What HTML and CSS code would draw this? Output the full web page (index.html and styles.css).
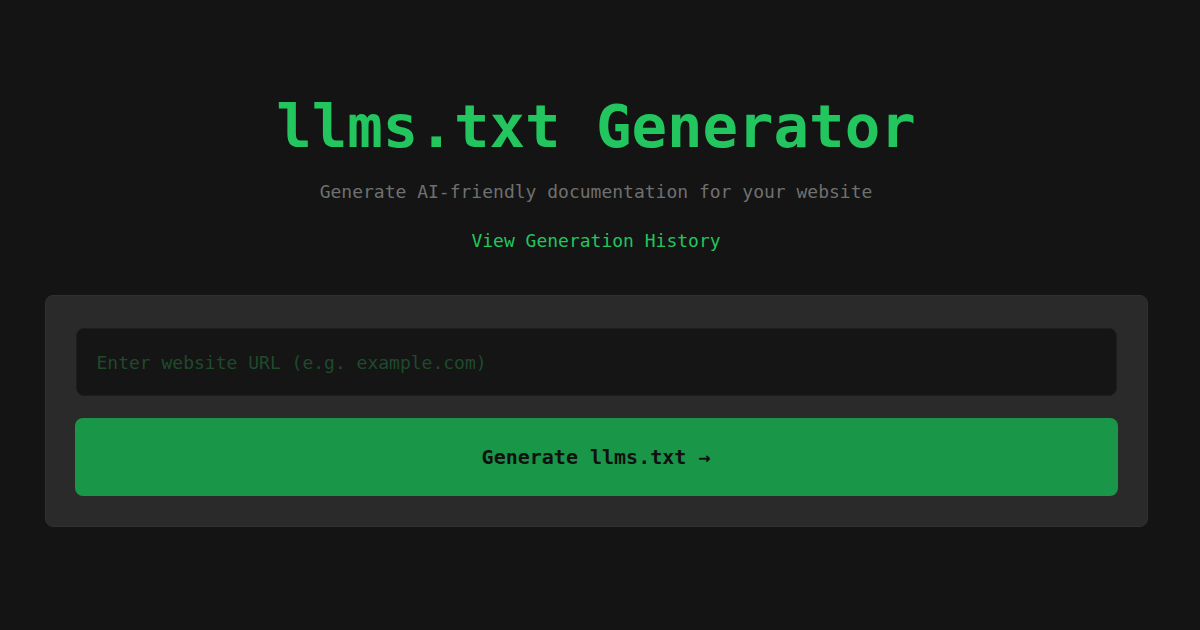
FILE: index.html
```html
<!DOCTYPE html>
<html>

<head>
  <meta charset="utf-8">
  <meta name="viewport" content="width=device-width">
  <title>llms.txt Generator</title>
  <link rel="stylesheet" href="styles.css">
</head>

<body>
  <div class="page">
    <div class="header">
      <h1 class="title">llms.txt Generator</h1>
      <p class="subtitle">Generate AI-friendly documentation for your website</p>
      <a class="history" href="#">View Generation History</a>
    </div>

    <div class="card">
      <input class="url-input" type="text" placeholder="Enter website URL (e.g. example.com)">
      <button class="generate">Generate llms.txt &rarr;</button>
    </div>
  </div>
</body>
</html>
```

FILE: styles.css
```css
html {
  height: 100%;
  background-color: #141414;
}

body {
  margin: 0;
  padding: 0 8px 0 0;
  font-family: "DejaVu Sans Mono", "Liberation Mono", monospace;
  color: #e5e5e5;
}

.page {
  width: 1103px;
  margin: 0 auto;
  padding-top: 92px;
}

.header {
  text-align: center;
}

.title {
  margin: 0;
  font-size: 59px;
  line-height: 70px;
  font-weight: bold;
  color: #22c55e;
}

.subtitle {
  margin: 18px 0 0;
  font-size: 18px;
  line-height: 24px;
  color: #707070;
}

.history {
  display: inline-block;
  margin-top: 25px;
  font-size: 18px;
  line-height: 24px;
  color: #22c55e;
  text-decoration: none;
}

.card {
  margin-top: 42px;
  background-color: #2a2a2a;
  border: 1px solid #303030;
  border-radius: 8px;
  padding: 32px 29px 30px;
  display: flex;
  flex-direction: column;
  gap: 22px;
}

.url-input {
  height: 68px;
  box-sizing: border-box;
  margin: 0 1px;
  padding: 0 20px;
  background-color: #151515;
  border: 1px solid #1d1d1d;
  border-radius: 8px;
  font-family: inherit;
  font-size: 18px;
  color: #e5e5e5;
  outline: none;
}

.url-input::placeholder {
  color: #1f4a2c;
}

.generate {
  height: 78px;
  background-color: #1a9648;
  border: none;
  border-radius: 8px;
  font-family: inherit;
  font-size: 20px;
  font-weight: bold;
  color: #111111;
  cursor: pointer;
}
```
